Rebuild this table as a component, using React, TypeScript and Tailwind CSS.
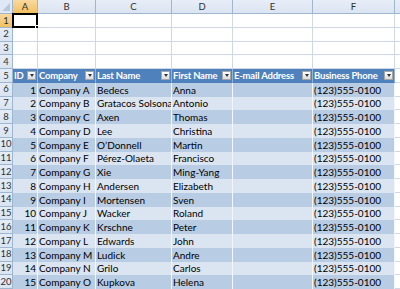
const cols = [
  { key: "A", w: "w-[25px]" },
  { key: "B", w: "w-[58px]" },
  { key: "C", w: "w-[76px]" },
  { key: "D", w: "w-[61px]" },
  { key: "E", w: "w-[80px]" },
  { key: "F", w: "w-[82px]" },
];

const headers = ["ID", "Company", "Last Name", "First Name", "E-mail Address", "Business Phone"];

const people: [string, string][] = [
  ["Bedecs", "Anna"],
  ["Gratacos Solsona", "Antonio"],
  ["Axen", "Thomas"],
  ["Lee", "Christina"],
  ["O\u2019Donnell", "Martin"],
  ["Pérez-Olaeta", "Francisco"],
  ["Xie", "Ming-Yang"],
  ["Andersen", "Elizabeth"],
  ["Mortensen", "Sven"],
  ["Wacker", "Roland"],
  ["Krschne", "Peter"],
  ["Edwards", "John"],
  ["Ludick", "Andre"],
  ["Grilo", "Carlos"],
  ["Kupkova", "Helena"],
];

function FilterButton() {
  return (
    <span className="ml-auto mr-[1px] flex h-[9px] w-[9px] shrink-0 items-center justify-center border border-[#a6a6a6] bg-gradient-to-b from-[#ffffff] to-[#dcdcdc]">
      <span className="h-0 w-0 border-x-[2.5px] border-t-[3px] border-x-transparent border-t-[#333]" />
    </span>
  );
}

function RowHead({ n, active }: { n: number; active?: boolean }) {
  return (
    <div
      className={`flex h-[13.75px] w-[13px] shrink-0 items-center justify-center border-b border-r border-[#9eb6ce] text-[9.5px] text-[#303030] ${
        active ? "bg-gradient-to-b from-[#f9d99f] to-[#f1c15f]" : "bg-gradient-to-b from-[#e4ecf7] to-[#dae4f1]"
      }`}
    >
      {n}
    </div>
  );
}

function EmptyRow({ n }: { n: number }) {
  return (
    <div className="flex">
      <RowHead n={n} active={n === 1} />
      {cols.map((c, i) => (
        <div key={c.key} className={`relative h-[13.75px] ${c.w} shrink-0 border-b border-r border-[#d0d7e5]`}>
          {n === 1 && i === 0 && (
            <>
              <div className="absolute -left-[1px] -top-[1px] h-[14.75px] w-[26px] border-2 border-black" />
              <div className="absolute -bottom-[2px] -right-[2px] h-[4px] w-[4px] border border-white bg-black" />
            </>
          )}
        </div>
      ))}
      <div className="h-[13.75px] flex-1 border-b border-[#d0d7e5]" />
    </div>
  );
}

export default function App() {
  return (
    <div className="h-[289px] w-[400px] overflow-hidden bg-white font-['Lato','Liberation_Sans',sans-serif] text-[10px] leading-none text-black">
      {/* column headers */}
      <div className="flex">
        <div className="relative h-[14px] w-[13px] shrink-0 border-b border-r border-[#9eb6ce] bg-[#dfe8f4]">
          <div className="absolute bottom-[2px] right-[2px] h-0 w-0 border-b-[8px] border-l-[8px] border-b-[#b6c8de] border-l-transparent" />
        </div>
        {cols.map((c, i) => (
          <div
            key={c.key}
            className={`flex h-[14px] ${c.w} shrink-0 items-center justify-center border-b border-r text-[9.5px] ${
              i === 0
                ? "border-r-[#9eb6ce] border-b-[#a0522d] bg-gradient-to-b from-[#f9d99f] to-[#f1c15f] text-[#303030]"
                : "border-[#9eb6ce] bg-gradient-to-b from-[#e8eef8] to-[#dbe4f1] text-[#303030]"
            }`}
          >
            {c.key}
          </div>
        ))}
        <div className="h-[14px] flex-1 border-b border-[#9eb6ce] bg-gradient-to-b from-[#e8eef8] to-[#dbe4f1]" />
      </div>

      {[1, 2, 3, 4].map((n) => (
        <EmptyRow key={n} n={n} />
      ))}

      {/* table header row */}
      <div className="flex">
        <RowHead n={5} />
        {cols.map((c, i) => (
          <div
            key={c.key}
            className={`flex h-[13.75px] ${c.w} shrink-0 items-center overflow-hidden border-b border-r border-b-[#4f81bd] border-r-[#95b3d7] bg-[#4f81bd] pl-[1px] text-[9.5px] font-bold tracking-[-0.2px] text-white`}
          >
            <span className="whitespace-nowrap">{headers[i]}</span>
            <FilterButton />
          </div>
        ))}
        <div className="h-[13.75px] flex-1 border-b border-[#d0d7e5]" />
      </div>

      {/* data rows */}
      {people.map(([last, first], idx) => {
        const band = idx % 2 === 0 ? "bg-[#b8cce4]" : "bg-[#dbe5f1]";
        const cells = [String(idx + 1), `Company ${String.fromCharCode(65 + idx)}`, last, first, "", "(123)555-0100"];
        return (
          <div key={idx} className="flex">
            <RowHead n={idx + 6} />
            {cols.map((c, i) => (
              <div
                key={c.key}
                className={`flex h-[13.75px] ${c.w} shrink-0 items-center overflow-hidden whitespace-nowrap border-r border-[#f2f6fa] ${band} ${
                  i === 0 ? "justify-end pr-[1px]" : "pl-[1px]"
                }`}
              >
                {cells[i]}
              </div>
            ))}
            <div className="h-[13.75px] flex-1 border-b border-[#d0d7e5]" />
          </div>
        );
      })}
    </div>
  );
}
